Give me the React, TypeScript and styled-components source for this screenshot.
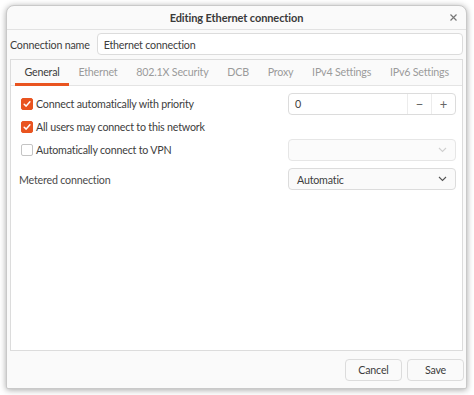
import React from 'react';
import styled, { createGlobalStyle } from 'styled-components';

const GlobalStyle = createGlobalStyle`
  html, body {
    margin: 0;
    padding: 0;
    background: #ffffff;
  }
  body {
    font-family: Lato, "Noto Sans", sans-serif;
    font-size: 10.7px;
    letter-spacing: -0.2px;
    color: #3d3d3d;
  }
`

const Screen = styled.div`
  width: 474px;
  height: 395px;
  padding: 5px 7px 6px 6px;
  box-sizing: border-box;
`
const Window = styled.div`
  width: 461px;
  height: 384px;
  background: #fafafa;
  border: 1px solid #c9c9c9;
  border-radius: 8px 8px 2px 2px;
  box-shadow: 0 1px 6px rgba(0, 0, 0, 0.35);
  box-sizing: border-box;
  display: flex;
  flex-direction: column;
  overflow: hidden;
`
const TitleBar = styled.div`
  height: 23px;
  flex: none;
  display: grid;
  grid-template-columns: 30px 1fr 30px;
  align-items: center;
  border-bottom: 1px solid #e2e2e2;
`
const Title = styled.div`
  text-align: center;
  font-weight: bold;
  font-size: 11px;
  letter-spacing: -0.1px;
  color: #3a3a3a;
`
const CloseButton = styled.div`
  display: flex;
  justify-content: center;
  padding-left: 4px;
  color: #777;
`
const Body = styled.div`
  flex: 1;
  display: flex;
  flex-direction: column;
  padding: 3px 3px 0 3px;
  gap: 4px;
`
const NameRow = styled.div`
  display: flex;
  align-items: center;
  gap: 7px;
`
const Label = styled.span<{ $muted?: boolean }>`
  color: ${p => (p.$muted ? '#4a4a4a' : '#3d3d3d')};
  white-space: nowrap;
`
const TextField = styled.div`
  flex: 1;
  height: 22px;
  border: 1px solid #dcdcdc;
  border-radius: 4px;
  background: #ffffff;
  display: flex;
  align-items: center;
  padding: 0 6px;
  box-sizing: border-box;
`
const Notebook = styled.div`
  flex: 1;
  border: 1px solid #dcdcdc;
  background: #ffffff;
  display: flex;
  flex-direction: column;
`
const TabBar = styled.div`
  height: 25px;
  display: flex;
  padding-left: 4px;
  border-bottom: 1px solid #e4e4e4;
  background: #fafafa;
`
const Tab = styled.div<{ $active?: boolean }>`
  padding: 0 9.4px;
  display: flex;
  align-items: center;
  color: ${p => (p.$active ? '#3d3d3d' : '#9a9a9a')};
  border-bottom: 3px solid ${p => (p.$active ? '#e95420' : 'transparent')};
  margin-bottom: -1px;
  white-space: nowrap;
`
const Page = styled.div`
  flex: 1;
  display: grid;
  grid-template-columns: 1fr 168px;
  grid-auto-rows: min-content;
  column-gap: 10px;
  padding: 6px 6px 0 8px;
  align-items: center;
`
const CheckRow = styled.label`
  display: flex;
  align-items: center;
  gap: 3px;
  height: 23px;
`
const Box = styled.span<{ $checked?: boolean }>`
  width: 12px;
  height: 12px;
  border-radius: 2px;
  box-sizing: border-box;
  border: 1px solid ${p => (p.$checked ? '#e95420' : '#c4c4c4')};
  background: ${p => (p.$checked ? '#e95420' : '#ffffff')};
  display: flex;
  align-items: center;
  justify-content: center;
  margin-left: 2px;
`
const Spin = styled.div`
  height: 22px;
  border: 1px solid #dcdcdc;
  border-radius: 4px;
  background: #ffffff;
  box-sizing: border-box;
  display: flex;
`
const SpinValue = styled.div`
  flex: 1;
  display: flex;
  align-items: center;
  padding-left: 6px;
`
const SpinButton = styled.div`
  width: 23px;
  display: flex;
  align-items: center;
  justify-content: center;
  border-left: 1px solid #ececec;
  color: #666;
  font-size: 13px;
`
const Combo = styled.div<{ $disabled?: boolean }>`
  height: 22px;
  border: 1px solid ${p => (p.$disabled ? '#e6e6e6' : '#dcdcdc')};
  border-radius: 4px;
  background: ${p => (p.$disabled ? '#fbfbfb' : '#fafafa')};
  box-sizing: border-box;
  display: flex;
  align-items: center;
  justify-content: space-between;
  padding: 0 8px;
  color: ${p => (p.$disabled ? '#c8c8c8' : '#3d3d3d')};
`
const Spacer = styled.div<{ $h: number }>`
  height: ${p => p.$h}px;
  grid-column: 1 / -1;
`
const Footer = styled.div`
  height: 37px;
  flex: none;
  display: flex;
  justify-content: flex-end;
  align-items: center;
  gap: 5px;
  padding-right: 2px;
`
const Button = styled.div`
  width: 57px;
  height: 22px;
  border: 1px solid #dcdcdc;
  border-radius: 4px;
  background: #fafafa;
  display: flex;
  align-items: center;
  justify-content: center;
  color: #3d3d3d;
  box-sizing: border-box;
`

const Check = () => (
  <svg width="8" height="8" viewBox="0 0 8 8">
    <path d="M1.2 4.2 L3.2 6.1 L6.9 1.8" fill="none" stroke="#fff" strokeWidth="1.5" strokeLinecap="round" strokeLinejoin="round" />
  </svg>
)

const Chevron = ({ color }: { color: string }) => (
  <svg width="9" height="6" viewBox="0 0 9 6">
    <path d="M1 1 L4.5 4.5 L8 1" fill="none" stroke={color} strokeWidth="1.1" />
  </svg>
)

const tabs = ['General', 'Ethernet', '802.1X Security', 'DCB', 'Proxy', 'IPv4 Settings', 'IPv6 Settings']

export default function App() {
  return (
    <>
      <GlobalStyle />
      <Screen>
        <Window>
          <TitleBar>
            <span />
            <Title>Editing Ethernet connection</Title>
            <CloseButton>
              <svg width="7" height="7" viewBox="0 0 7 7">
                <path d="M0.5 0.5 L6.5 6.5 M6.5 0.5 L0.5 6.5" stroke="#777" strokeWidth="1.2" />
              </svg>
            </CloseButton>
          </TitleBar>
          <Body>
            <NameRow>
              <Label>Connection name</Label>
              <TextField>Ethernet connection</TextField>
            </NameRow>
            <Notebook>
              <TabBar>
                {tabs.map((t, i) => (
                  <Tab key={t} $active={i === 0}>{t}</Tab>
                ))}
              </TabBar>
              <Page>
                <CheckRow>
                  <Box $checked><Check /></Box>
                  Connect automatically with priority
                </CheckRow>
                <Spin>
                  <SpinValue>0</SpinValue>
                  <SpinButton>−</SpinButton>
                  <SpinButton>+</SpinButton>
                </Spin>
                <CheckRow>
                  <Box $checked><Check /></Box>
                  All users may connect to this network
                </CheckRow>
                <span />
                <CheckRow>
                  <Box />
                  Automatically connect to VPN
                </CheckRow>
                <Combo $disabled>
                  <span />
                  <Chevron color="#d0d0d0" />
                </Combo>
                <Spacer $h={7} />
                <Label $muted>Metered connection</Label>
                <Combo>
                  Automatic
                  <Chevron color="#555" />
                </Combo>
              </Page>
            </Notebook>
          </Body>
          <Footer>
            <Button>Cancel</Button>
            <Button>Save</Button>
          </Footer>
        </Window>
      </Screen>
    </>
  )
}
